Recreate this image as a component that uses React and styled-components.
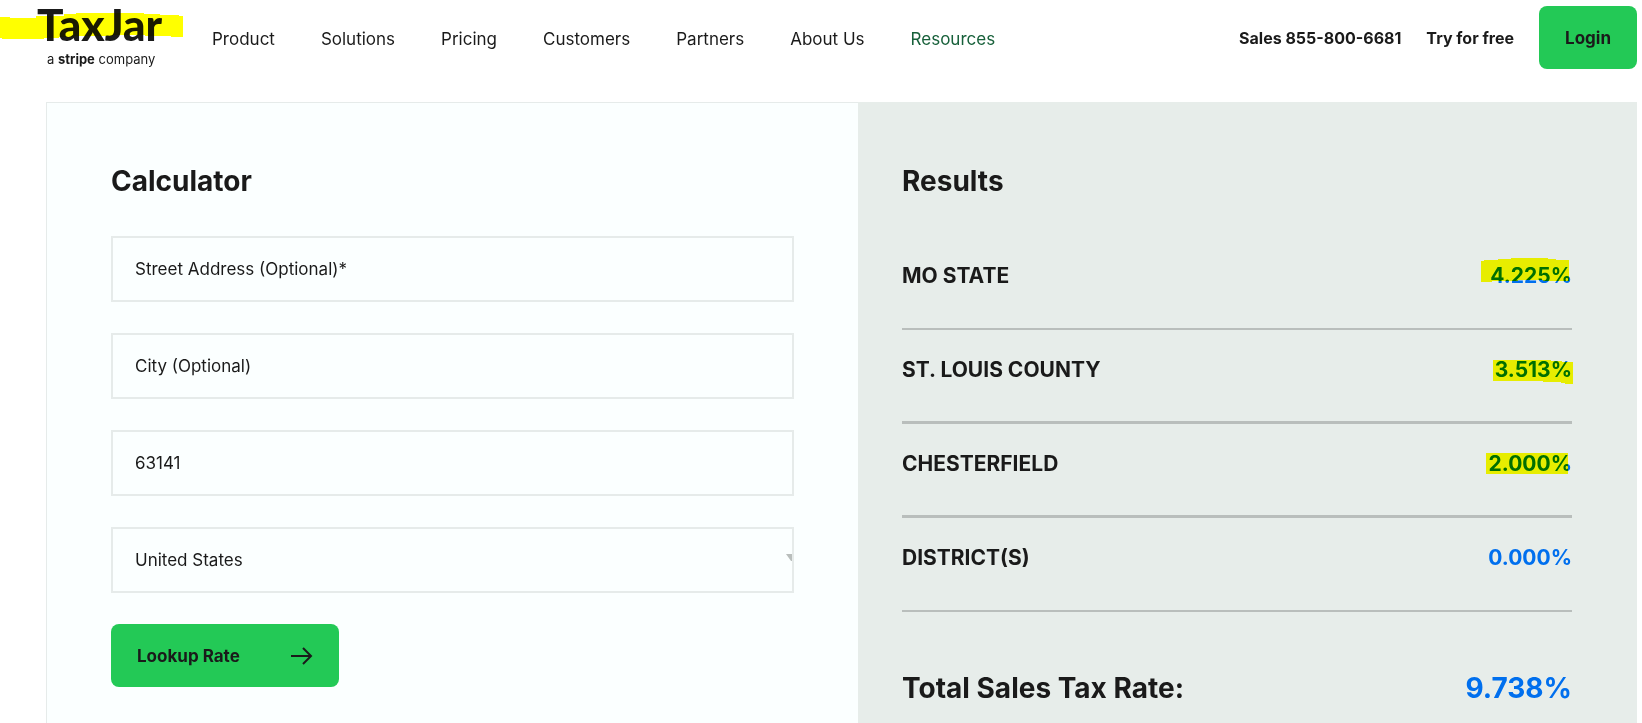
import React, { useState } from 'react';
import styled, { createGlobalStyle } from 'styled-components';

const GlobalStyle = createGlobalStyle`
  * {
    box-sizing: border-box;
  }
  body {
    margin: 0;
    background: #ffffff;
    color: #1a1a1a;
    font-family: Inter, "Liberation Sans", sans-serif;
    font-size: 17px;
    line-height: 24px;
  }
  input, select, button {
    font: inherit;
    color: inherit;
  }
`;

const Page = styled.div`
  display: flex;
  flex-direction: column;
  min-height: 100vh;
`;
const Header = styled.header`
  display: flex;
  align-items: center;
  justify-content: space-between;
  padding: 6px 5px 33px 37px;
`;
const HeaderGroup = styled.div`
  display: flex;
  align-items: center;
  gap: ${(props) => props.$gap}px;
`;
const Logo = styled.a`
  position: relative;
  display: flex;
  flex-direction: column;
  gap: 7px;
  width: 128px;
  color: #1a1a1a;
  text-decoration: none;
`;
const LogoName = styled.span`
  font-family: Lato, "Liberation Sans", sans-serif;
  font-size: 44px;
  font-weight: 900;
  line-height: 36px;
`;
const LogoTagline = styled.span`
  padding-left: 10px;
  font-size: 13px;
  line-height: 20px;
  white-space: nowrap;
`;
const Nav = styled.nav`
  display: flex;
  gap: 46px;
  padding-top: 3px;
`;
const NavLink = styled.a`
  color: ${(props) => (props.$active ? '#17603a' : '#1a1a1a')};
  text-decoration: none;
  white-space: nowrap;
`;
const ActionLink = styled(NavLink)`
  font-size: 16px;
  font-weight: 700;
`;
const Button = styled.button`
  display: flex;
  align-items: center;
  justify-content: space-between;
  gap: 51px;
  height: 63px;
  padding: 0 26px;
  border: 0;
  border-radius: 8px;
  background: #23c956;
  font-weight: 700;
  cursor: pointer;
`;
const Panels = styled.main`
  flex: 1;
  display: grid;
  grid-template-columns: 812fr 779fr;
  margin: 0 5px 0 46px;
`;
const Calculator = styled.form`
  display: flex;
  flex-direction: column;
  align-items: flex-start;
  gap: 31px;
  padding: 60px 64px 32px;
  border: 1px solid #e6ebea;
  border-width: 1px 0 0 1px;
  background: #fbffff;
`;
const Results = styled.section`
  padding: 61px 65px 12px 44px;
  background: #e7edea;
`;
const Title = styled.h2`
  margin: 0;
  padding-bottom: ${(props) => props.$space}px;
  font-size: 28px;
  font-weight: 700;
  line-height: 36px;
`;
const Field = styled.input`
  width: 100%;
  height: 66px;
  padding: 0 22px;
  border: 2px solid #e6ebea;
  border-radius: 0;
  background: transparent;
  outline: 0;

  &::placeholder {
    color: #1a1a1a;
    opacity: 1;
  }
  &:focus {
    border-color: #23c956;
  }
`;
const SelectField = styled(Field).attrs({ as: 'select' })`
  display: block;
  appearance: none;
`;
const SelectBox = styled.div`
  position: relative;
  width: 100%;

  svg {
    position: absolute;
    top: 27px;
    right: 2px;
    pointer-events: none;
  }
`;
const RateTable = styled.table`
  width: 100%;
  border-spacing: 0;
`;
const RateLabel = styled.th`
  height: 94px;
  padding: 26px 0 0;
  border-bottom: ${(props) => (props.$thick ? 3 : 2)}px solid #b9bebc;
  font-size: 21px;
  font-weight: 700;
  line-height: 28px;
  text-align: left;
  vertical-align: top;
`;
const RateValue = styled(RateLabel).attrs({ as: 'td' })`
  color: #006fee;
  text-align: right;
`;
const TotalLabel = styled.th`
  padding: 58px 0 0;
  font-size: 28px;
  font-weight: 700;
  line-height: 36px;
  text-align: left;
`;
const TotalValue = styled(TotalLabel).attrs({ as: 'td' })`
  color: #006fee;
  text-align: right;
`;
const Marked = styled.span`
  position: relative;
`;
const MarkerStroke = styled.svg`
  position: absolute;
  top: ${(props) => props.$top}px;
  right: ${(props) => props.$right}px;
  mix-blend-mode: multiply;
  pointer-events: none;
`;

const links = ['Product', 'Solutions', 'Pricing', 'Customers', 'Partners', 'About Us', 'Resources'];

// strokes of the highlighter pen, drawn over the text
const markers = {
  logo: { width: 184, height: 27, top: 7, right: -18, d: 'M0 4H11V5H37V3H65V1H77V0H145V1H161V2H180V3H184V24H172V23H146V22H114V23H75V24H60V25H45V26H3V25H0Z' },
  state: { width: 88, height: 24, top: -5, right: 3, d: 'M0 3H3V2H17V1H30V0H67V1H75V2H88V23H62V22H37V23H11V24H0Z' },
  county: { width: 80, height: 24, top: 3, right: -1, d: 'M0 0H58V1H69V2H80V24H72V23H68V22H50V21H0Z' },
  city: { width: 82, height: 21, top: 2, right: 4, d: 'M0 0H82V21H0Z' },
};

const rates = [
  { label: 'MO STATE', value: '4.225%', marker: 'state' },
  { label: 'ST. LOUIS COUNTY', value: '3.513%', marker: 'county', thick: true },
  { label: 'CHESTERFIELD', value: '2.000%', marker: 'city', thick: true },
  { label: 'DISTRICT(S)', value: '0.000%' },
];

function Marker({ name }) {
  const { width, height, top, right, d } = markers[name];
  return (
    <MarkerStroke $top={top} $right={right} width={width} height={height} aria-hidden="true">
      <path d={d} fill="#ffff00" />
    </MarkerStroke>
  );
}

function App() {
  const [zip, setZip] = useState('63141');

  return (
    <>
      <GlobalStyle />
      <Page>
        <Header>
          <HeaderGroup $gap={47}>
            <Logo href="#">
              <LogoName>TaxJar</LogoName>
              <LogoTagline>a <b>stripe</b> company</LogoTagline>
              <Marker name="logo" />
            </Logo>
            <Nav>
              {links.map((link) => (
                <NavLink key={link} href="#" $active={link === 'Resources'}>{link}</NavLink>
              ))}
            </Nav>
          </HeaderGroup>
          <HeaderGroup $gap={25}>
            <ActionLink href="#">Sales 855-800-6681</ActionLink>
            <ActionLink href="#">Try for free</ActionLink>
            <Button type="button">Login</Button>
          </HeaderGroup>
        </Header>
        <Panels>
          <Calculator onSubmit={(e) => e.preventDefault()}>
            <Title $space={6}>Calculator</Title>
            <Field aria-label="Street Address" placeholder="Street Address (Optional)*" />
            <Field aria-label="City" placeholder="City (Optional)" />
            <Field aria-label="Zip Code" value={zip} onChange={(e) => setZip(e.target.value)} />
            <SelectBox>
              <SelectField aria-label="Country">
                <option>United States</option>
              </SelectField>
              <svg width="6" height="7" aria-hidden="true">
                <path d="M0 0H6V7H5Z" fill="#b9bebc" />
              </svg>
            </SelectBox>
            <Button type="submit">
              Lookup Rate
              <svg width="22" height="20" viewBox="0 0 22 20" fill="none" stroke="#1a1a1a" strokeWidth="2" aria-hidden="true">
                <path d="M0 10H20M12 2L20 10L12 18" />
              </svg>
            </Button>
          </Calculator>
          <Results>
            <Title $space={37}>Results</Title>
            <RateTable>
              <tbody>
                {rates.map(({ label, value, marker, thick }) => (
                  <tr key={label}>
                    <RateLabel scope="row" $thick={thick}>{label}</RateLabel>
                    <RateValue $thick={thick}>
                      <Marked>
                        {value}
                        {marker && <Marker name={marker} />}
                      </Marked>
                    </RateValue>
                  </tr>
                ))}
              </tbody>
              <tfoot>
                <tr>
                  <TotalLabel scope="row">Total Sales Tax Rate:</TotalLabel>
                  <TotalValue>9.738%</TotalValue>
                </tr>
              </tfoot>
            </RateTable>
          </Results>
        </Panels>
      </Page>
    </>
  );
}

export default App;
